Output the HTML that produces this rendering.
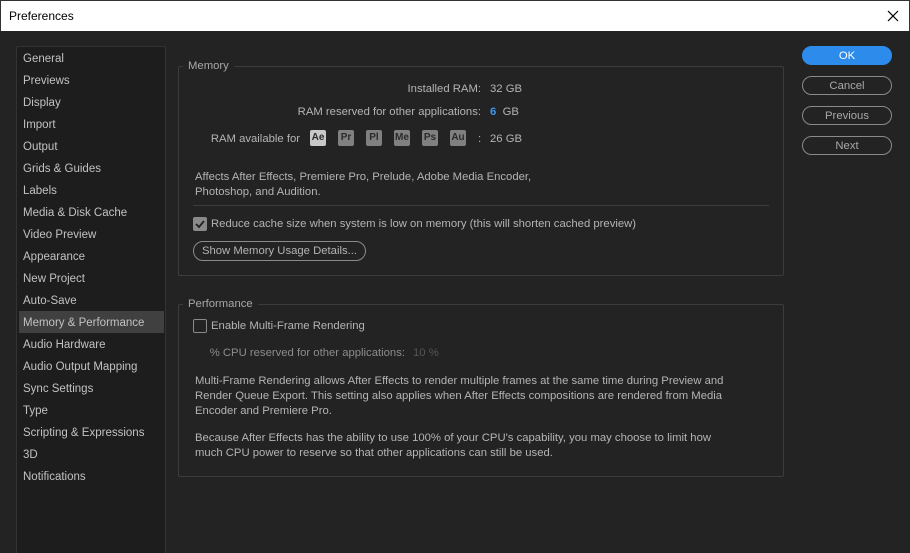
<!DOCTYPE html><html style="height:553px;overflow:hidden"><head><style>
*{box-sizing:border-box;margin:0;padding:0}
body{width:910px;height:553px;background:#232323;font-family:"Liberation Sans",sans-serif;font-size:11.3px;line-height:15px;color:#b4b4b4;position:relative;overflow:hidden}
.a{position:absolute;white-space:nowrap}
.r{text-align:right}
#title{left:0;top:0;width:910px;height:31px;background:#fff;border:1px solid #333;border-bottom:none;color:#000;font-size:12px}
#side{left:16px;top:46px;width:150px;height:507px;background:#1d1d1d;border:1px solid #333;border-bottom:none;border-radius:2px 2px 0 0}
.it{position:absolute;left:6px;height:22px;line-height:24px;color:#c2c2c2;font-size:11.5px}
.sel{left:2px;width:145px;padding-left:4px;background:#404040}
.box{border:1px solid #3c3c3c;border-radius:2px}
.leg{background:#232323;padding:0 5px;color:#a8a8a8}
.btn{left:802px;width:90px;height:19px;border:1px solid #8a8a8a;border-radius:10px;text-align:center;line-height:18px;color:#a8a8a8}
.badge{position:absolute;top:130px;width:16px;height:16px;background:#808080;border-radius:2px;color:#2a2a2a;font-size:10px;text-align:center;line-height:16px;font-weight:bold}
</style></head><body>
<div class="a" id="title"><span class="a" style="left:8px;top:8px">Preferences</span>
<svg class="a" style="left:886px;top:9px" width="12" height="12"><path d="M1 1L11 11M11 1L1 11" stroke="#000" stroke-width="1.2"/></svg></div>
<div class="a" id="side">
<div class="it" style="top:0">General</div><div class="it" style="top:22px">Previews</div><div class="it" style="top:44px">Display</div><div class="it" style="top:66px">Import</div><div class="it" style="top:88px">Output</div><div class="it" style="top:110px">Grids &amp; Guides</div><div class="it" style="top:132px">Labels</div><div class="it" style="top:154px">Media &amp; Disk Cache</div><div class="it" style="top:176px">Video Preview</div><div class="it" style="top:198px">Appearance</div><div class="it" style="top:220px">New Project</div><div class="it" style="top:242px">Auto-Save</div><div class="it sel" style="top:264px">Memory &amp; Performance</div><div class="it" style="top:286px">Audio Hardware</div><div class="it" style="top:308px">Audio Output Mapping</div><div class="it" style="top:330px">Sync Settings</div><div class="it" style="top:352px">Type</div><div class="it" style="top:374px">Scripting &amp; Expressions</div><div class="it" style="top:396px">3D</div><div class="it" style="top:418px">Notifications</div>
</div>
<div class="a box" style="left:178px;top:66px;width:606px;height:210px"></div>
<div class="a leg" style="left:183px;top:59px">Memory</div>
<div class="a r" style="left:250px;width:231px;top:82px">Installed RAM:</div><div class="a" style="left:490px;top:82px">32 GB</div>
<div class="a r" style="left:250px;width:231px;top:105px">RAM reserved for other applications:</div><div class="a" style="left:490px;top:105px"><span style="color:#3a9af0;font-weight:bold">6</span>&nbsp;&nbsp;GB</div>
<div class="a r" style="left:150px;width:150px;top:132px">RAM available for</div>
<div class="badge" style="left:310px;background:#c8c8c8">Ae</div><div class="badge" style="left:338px">Pr</div><div class="badge" style="left:366px">Pl</div><div class="badge" style="left:394px">Me</div><div class="badge" style="left:422px">Ps</div><div class="badge" style="left:450px">Au</div>
<div class="a" style="left:478px;top:132px">:</div><div class="a" style="left:490px;top:132px">26 GB</div>
<div class="a" style="left:195px;top:170px;line-height:15px">Affects After Effects, Premiere Pro, Prelude, Adobe Media Encoder,<br>Photoshop, and Audition.</div>
<div class="a" style="left:193px;top:205px;width:576px;height:1px;background:#3c3c3c"></div>
<div class="a" style="left:193px;top:217px;width:14px;height:14px;background:#8a8a8a;border-radius:2px"><svg width="14" height="14"><path d="M3 7L6 10L11 4" stroke="#222" stroke-width="1.8" fill="none"/></svg></div>
<div class="a" style="left:211px;top:217px">Reduce cache size when system is low on memory (this will shorten cached preview)</div>
<div class="a" style="left:193px;top:241px;width:173px;height:20px;border:1px solid #8a8a8a;border-radius:10px;text-align:center;line-height:19px">Show Memory Usage Details...</div>
<div class="a box" style="left:178px;top:304px;width:606px;height:173px"></div>
<div class="a leg" style="left:183px;top:297px">Performance</div>
<div class="a" style="left:193px;top:319px;width:14px;height:14px;border:1px solid #8a8a8a;border-radius:2px"></div>
<div class="a" style="left:211px;top:319px">Enable Multi-Frame Rendering</div>
<div class="a r" style="left:180px;width:225px;top:346px;color:#8c8c8c">% CPU reserved for other applications:</div><div class="a" style="left:413px;top:346px;color:#555">10 %</div>
<div class="a" style="left:195px;top:374px;line-height:15px">Multi-Frame Rendering allows After Effects to render multiple frames at the same time during Preview and<br>Render Queue Export. This setting also applies when After Effects compositions are rendered from Media<br>Encoder and Premiere Pro.</div>
<div class="a" style="left:195px;top:431px;line-height:15px">Because After Effects has the ability to use 100% of your CPU's capability, you may choose to limit how<br>much CPU power to reserve so that other applications can still be used.</div>
<div class="a btn" style="top:46px;background:#2d8ceb;border-color:#2d8ceb;color:#fff">OK</div>
<div class="a btn" style="top:76px">Cancel</div>
<div class="a btn" style="top:106px">Previous</div>
<div class="a btn" style="top:136px">Next</div>
</body></html>
